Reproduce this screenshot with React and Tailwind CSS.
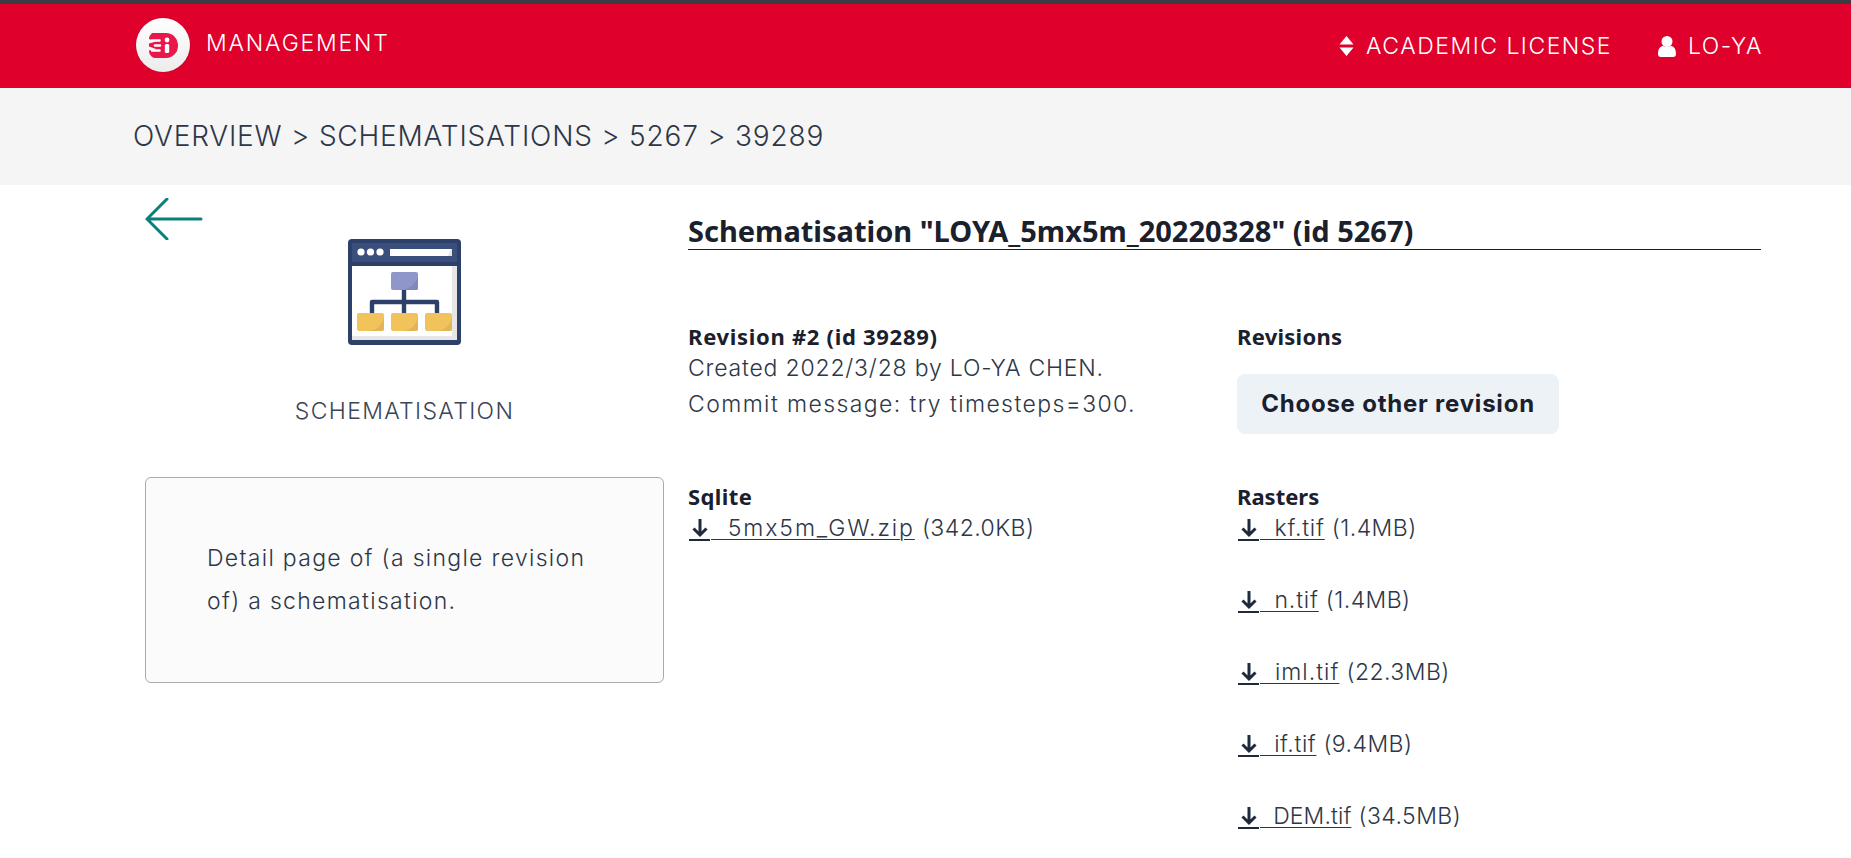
const body = { fontFamily: '"Inter", "Liberation Sans", sans-serif' };
const head = { fontFamily: '"Noto Sans", "Open Sans", sans-serif' };

function Logo() {
  return (
    <div className="w-[54px] h-[54px] rounded-full bg-gradient-to-b from-white to-[#ececec] flex items-center justify-center shadow-[0_0_1px_rgba(0,0,0,0.4)]">
      <svg width="29" height="25" viewBox="0 0 29 25">
        <path d="M7 0h10a12 12 0 0 1 12 12.500 12 12 0 0 1-12 12.500H7a7 7 0 0 1-7-6.500v-1l7-1.500-7-2.500v-3l7-2-7-2.500v-1a7 7 0 0 1 7-6z" fill="#e9174a" />
        <path d="M3 7.500h7.500M6 12.500h5M3 17.500h7.500" fill="none" stroke="#fff" strokeWidth="2.600" strokeLinecap="round" />
        <circle cx="18" cy="7" r="2.400" fill="#fff" />
        <rect x="15.800" y="11" width="4.400" height="9" rx="1.600" fill="#fff" />
      </svg>
    </div>
  );
}

function SchemaIcon() {
  return (
    <svg width="113" height="106" viewBox="0 0 113 106">
      <rect x="0" y="0" width="113" height="106" rx="4" fill="#2d4069" />
      <rect x="4" y="4" width="105" height="19" fill="#3a4f7c" />
      <rect x="4" y="27" width="105" height="74" fill="#ffffff" />
      <path d="M109 27v74H4v-4h100V27z" fill="#e6e6e6" />
      <circle cx="13" cy="13" r="3.600" fill="#fff" />
      <circle cx="22.500" cy="13" r="3.600" fill="#fff" />
      <circle cx="32" cy="13" r="3.600" fill="#fff" />
      <rect x="42" y="10" width="62" height="7" fill="#fff" />
      <path d="M103 10h1v7h-4z" fill="#e3e3e3" />
      <path d="M56 50v26M24 76V63h65v13" fill="none" stroke="#2d4069" strokeWidth="4.400" strokeLinejoin="round" />
      <rect x="43" y="33" width="27" height="18" rx="2" fill="#8f96c9" />
      <path d="M52 51c9 0 15-6 18-13v11a2 2 0 0 1-2 2z" fill="#8188bb" />
      <rect x="9" y="74" width="27" height="18" rx="2" fill="#f2c35b" />
      <rect x="43" y="74" width="27" height="18" rx="2" fill="#f2c35b" />
      <rect x="77" y="74" width="27" height="18" rx="2" fill="#f2c35b" />
      <path d="M20 92c8 0 14-6 16-13v11a2 2 0 0 1-2 2zM54 92c8 0 14-6 16-13v11a2 2 0 0 1-2 2zM88 92c8 0 14-6 16-13v11a2 2 0 0 1-2 2z" fill="#e0b55a" />
    </svg>
  );
}

function DownloadLink({ name, size, nameClass }) {
  return (
    <div className="h-[36px] flex items-center text-[23px] leading-[36px] font-light text-[#2d3748] whitespace-nowrap">
      <svg width="22" height="24" viewBox="0 0 22 24" className="mr-[0px] ml-[1px] shrink-0 mt-[2px]" fill="none" stroke="#1f2a3c" strokeWidth="3">
        <path d="M11 2v16M4.500 11.500L11 18l6.500-6.500" />
        <path d="M0 23h21" strokeWidth="2" />
      </svg>
      <span className={"underline decoration-1 underline-offset-[3px] whitespace-pre font-light " + nameClass}>{"  " + name}</span>
      <span className="ml-[7px] tracking-[0.45px]">({size})</span>
    </div>
  );
}

function Label({ children, className }) {
  return <div className={"text-[22px] leading-[29px] font-bold text-[#1a202c] " + (className || "")} style={head}>{children}</div>;
}

export default function App() {
  return (
    <div className="h-[858px] overflow-hidden bg-white" style={body}>
      <div className="h-1 bg-[#3c3c44]" />
      <header className="h-[84px] bg-[#df002b] text-white flex items-center justify-between pl-[136px] pr-[88px]">
        <div className="flex items-center gap-[16px] mb-[2px]">
          <Logo />
          <span className="text-[23px] font-light tracking-[1.8px] mb-[4px]">MANAGEMENT</span>
        </div>
        <div className="flex items-center gap-[46px] text-[23px] font-light tracking-[1.5px]">
          <div className="flex items-center gap-[12px]">
            <svg width="15" height="20" viewBox="0 0 15 20" fill="#fff">
              <path d="M7.500 0l7 8.500H.5zM7.500 20L.5 11.500h14z" />
            </svg>
            ACADEMIC LICENSE
          </div>
          <div className="flex items-center gap-[12px]">
            <svg width="18" height="21" viewBox="0 0 18 21" fill="#fff">
              <circle cx="9" cy="5.500" r="5.500" />
              <path d="M0 18c0-6 3-8 5-8 1 1 6 1 8 0 2 0 5 2 5 8 0 2-1 3-3 3H3c-2 0-3-1-3-3z" />
            </svg>
            LO-YA
          </div>
        </div>
      </header>
      <nav className="h-[97px] bg-[#f5f5f5] flex items-center pl-[133px] pb-[2px] text-[28px] font-light text-[#2d3748] tracking-[0.8px]">
        OVERVIEW &gt; SCHEMATISATIONS &gt; 5267 &gt; 39289
      </nav>
      <main className="flex pl-[145px] pr-[90px]">
        <aside className="w-[519px] shrink-0">
          <div className="h-[54px] pt-[13px]">
            <svg width="58" height="42" viewBox="0 0 58 42" fill="none" stroke="#0c7f78" strokeWidth="3" strokeLinecap="round">
              <path d="M56 21H2M22 1L2 21l20 20" />
            </svg>
          </div>
          <div className="flex flex-col items-center">
            <SchemaIcon />
            <div className="mt-[51px] text-[23px] font-light text-[#3a4556] leading-[30px] tracking-[1.35px]">SCHEMATISATION</div>
          </div>
          <div className="mt-[51px] h-[206px] rounded-[6px] border border-[#aaaaaa] bg-[#fbfbfb] pl-[61px] pr-[60px] pt-[59px] text-[23px] leading-[43px] font-light text-[#2d3748] tracking-[1.3px]">
            Detail page of (a single revision of) a schematisation.
          </div>
        </aside>
        <section className="ml-[24px] flex-1">
          <h1 className="mt-[28px] border-b border-[#1a202c] text-[29px] leading-[36px] font-bold text-[#1a202c]" style={head}>
            Schematisation "LOYA_5mx5m_20220328" (id 5267)
          </h1>
          <div className="grid grid-cols-[549px_1fr] mt-[72px]">
            <div>
              <Label className="tracking-[0.7px]">Revision #2 (id 39289)</Label>
              <div className="text-[23px] leading-[35.5px] font-light text-[#2d3748]">
                <div className="tracking-[0.8px]">Created 2022/3/28 by LO-YA CHEN.</div>
                <div className="tracking-[1.4px]">Commit message: try timesteps=300.</div>
              </div>
            </div>
            <div>
              <Label className="tracking-[0.25px]">Revisions</Label>
              <button className="mt-[23px] h-[60px] w-[322px] rounded-[8px] bg-[#edf2f7] text-[#1a202c] text-[24px] font-bold tracking-[0.78px]">
                Choose other revision
              </button>
            </div>
            <div className="mt-[48px]">
              <Label className="tracking-[0.4px]">Sqlite</Label>
              <div className="-mt-[1px]">
                <DownloadLink name="5mx5m_GW.zip" size="342.0KB" nameClass="tracking-[1.9px]" />
              </div>
            </div>
            <div className="mt-[48px]">
              <Label>Rasters</Label>
              <div className="flex flex-col gap-[36px] -mt-[1px]">
                <DownloadLink name="kf.tif" size="1.4MB" nameClass="tracking-[0.8px]" />
                <DownloadLink name="n.tif" size="1.4MB" nameClass="tracking-[0.8px]" />
                <DownloadLink name="iml.tif" size="22.3MB" nameClass="tracking-[1px]" />
                <DownloadLink name="if.tif" size="9.4MB" nameClass="tracking-[0.6px]" />
                <DownloadLink name="DEM.tif" size="34.5MB" nameClass="tracking-[0.1px]" />
              </div>
            </div>
          </div>
        </section>
      </main>
    </div>
  );
}
